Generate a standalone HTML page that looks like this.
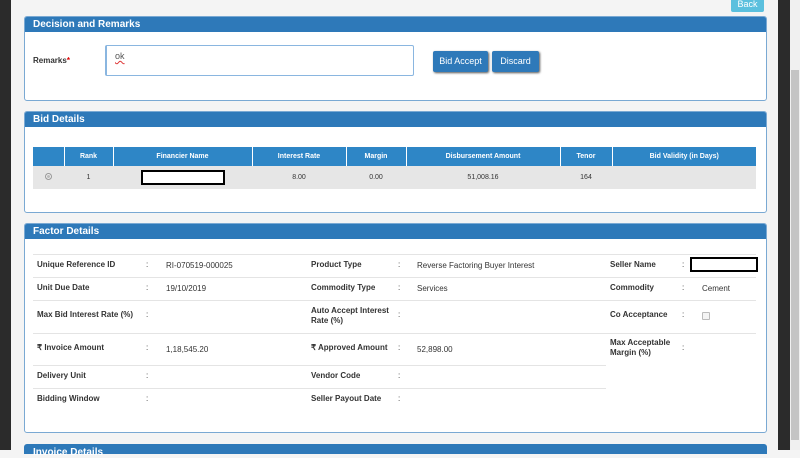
<!DOCTYPE html>
<html><head><style>
body{margin:0;width:800px;height:450px;overflow:hidden;background:#f4f4f4;font-family:"Liberation Sans",Arial,sans-serif;position:relative}
.abs{position:absolute}
.panel{position:absolute;left:24px;width:741px;background:#fff;border:1px solid #7aa9d3;border-radius:3px}
.ph{background:#2e79b9;color:#fff;font-weight:bold;font-size:10px;height:15px;line-height:15px;padding-left:8px;border-radius:2px 2px 0 0}
.btn{position:absolute;background:#2e79b9;color:#fff;font-size:9px;text-align:center;line-height:21px;height:21px;box-shadow:1px 1px 2px #555;border-radius:2px}
table{border-collapse:collapse;position:absolute;left:8px;top:35px;width:723px;font-size:7px;table-layout:fixed}
th{background:#2e86c6;color:#fff;height:19px;border-left:1px solid #fff;font-weight:bold;padding:0}
td{background:#e6e6e6;height:23px;text-align:center;color:#333;padding:0}
.t{position:absolute;font-size:8px;color:#333}
.b{font-weight:bold}
.ln{position:absolute;height:1px;background:#e4e4e4}
</style></head><body>
<div class="abs" style="left:0;top:0;width:11px;height:450px;background:#2b2b2b"></div>
<div class="abs" style="left:778px;top:0;width:12px;height:450px;background:#2b2b2b"></div>
<div class="abs" style="left:790px;top:0;width:10px;height:450px;background:#f0f0f0"></div>
<div class="abs" style="left:791px;top:70px;width:8px;height:370px;background:#c4c4c4"></div>
<div class="btn" style="left:731px;top:-6px;width:33px;background:#5bc0de;box-shadow:none;line-height:20px;height:18px;font-size:9px">Back</div>

<div class="panel" style="top:16px;height:83px">
<div class="ph">Decision and Remarks</div>
<div class="t b" style="left:8px;top:39px">Remarks<span style="color:#d00">*</span></div>
<div class="abs" style="left:80px;top:28px;width:309px;height:31px;border:1px solid #8ab6e0;border-left:2px solid #8ab6e0;border-radius:2px;font-size:9px;color:#555;padding:5px 0 0 8px;box-sizing:border-box;text-decoration:underline wavy #d33">ok</div>
<div class="btn" style="left:408px;top:34px;width:55px">Bid Accept</div>
<div class="btn" style="left:467px;top:34px;width:47px">Discard</div>
</div>

<div class="panel" style="top:111px;height:100px">
<div class="ph">Bid Details</div>
<table><colgroup><col style="width:31px"><col style="width:49px"><col style="width:139px"><col style="width:94px"><col style="width:60px"><col style="width:154px"><col style="width:52px"><col style="width:144px"></colgroup>
<tr><th style="border-left:none"></th><th>Rank</th><th>Financier Name</th><th>Interest Rate</th><th>Margin</th><th>Disbursement Amount</th><th>Tenor</th><th>Bid Validity (in Days)</th></tr>
<tr><td><span style="display:inline-block;width:5px;height:5px;border:1px solid #999;border-radius:50%;background:#bbb;box-shadow:inset 0 0 0 1px #eee"></span></td><td>1</td><td><span style="display:inline-block;width:80px;height:11px;border:2px solid #000;background:#fff;vertical-align:middle"></span></td><td>8.00</td><td>0.00</td><td>51,008.16</td><td>164</td><td></td></tr></table>
</div>

<div class="panel" style="top:223px;height:208px">
<div class="ph">Factor Details</div>
</div>
<div class="ln" style="left:33px;top:254px;width:723px"></div>
<div class="ln" style="left:33px;top:277px;width:723px"></div>
<div class="ln" style="left:33px;top:300px;width:723px"></div>
<div class="ln" style="left:33px;top:333px;width:723px"></div>
<div class="ln" style="left:33px;top:365px;width:573px"></div>
<div class="ln" style="left:33px;top:388px;width:573px"></div>

<div class="t b" style="left:37px;top:260px">Unique Reference ID</div><div class="t" style="left:146px;top:260px">:</div><div class="t" style="left:166px;top:261px">RI-070519-000025</div>
<div class="t b" style="left:37px;top:283px">Unit Due Date</div><div class="t" style="left:146px;top:283px">:</div><div class="t" style="left:166px;top:284px">19/10/2019</div>
<div class="t b" style="left:37px;top:310px">Max Bid Interest Rate (%)</div><div class="t" style="left:146px;top:310px">:</div>
<div class="t b" style="left:37px;top:343px">₹ Invoice Amount</div><div class="t" style="left:146px;top:343px">:</div><div class="t" style="left:166px;top:345px">1,18,545.20</div>
<div class="t b" style="left:37px;top:371px">Delivery Unit</div><div class="t" style="left:146px;top:371px">:</div>
<div class="t b" style="left:37px;top:394px">Bidding Window</div><div class="t" style="left:146px;top:394px">:</div>

<div class="t b" style="left:311px;top:260px">Product Type</div><div class="t" style="left:398px;top:260px">:</div><div class="t" style="left:417px;top:261px">Reverse Factoring Buyer Interest</div>
<div class="t b" style="left:311px;top:283px">Commodity Type</div><div class="t" style="left:398px;top:283px">:</div><div class="t" style="left:417px;top:284px">Services</div>
<div class="t b" style="left:311px;top:306px;line-height:10px">Auto Accept Interest<br>Rate (%)</div><div class="t" style="left:398px;top:310px">:</div>
<div class="t b" style="left:311px;top:343px">₹ Approved Amount</div><div class="t" style="left:398px;top:343px">:</div><div class="t" style="left:417px;top:345px">52,898.00</div>
<div class="t b" style="left:311px;top:371px">Vendor Code</div><div class="t" style="left:398px;top:371px">:</div>
<div class="t b" style="left:311px;top:394px">Seller Payout Date</div><div class="t" style="left:398px;top:394px">:</div>

<div class="t b" style="left:610px;top:260px">Seller Name</div><div class="t" style="left:682px;top:260px">:</div><div class="abs" style="left:690px;top:257px;width:64px;height:11px;border:2px solid #000;background:#fff"></div>
<div class="t b" style="left:610px;top:283px">Commodity</div><div class="t" style="left:682px;top:283px">:</div><div class="t" style="left:702px;top:284px">Cement</div>
<div class="t b" style="left:610px;top:310px">Co Acceptance</div><div class="t" style="left:682px;top:310px">:</div><div class="abs" style="left:702px;top:312px;width:6px;height:6px;border:1px solid #bbb;border-radius:1px;background:#f4f4f4"></div>
<div class="t b" style="left:610px;top:338px;line-height:10px">Max Acceptable<br>Margin (%)</div><div class="t" style="left:682px;top:343px">:</div>

<div class="abs" style="left:24px;top:444px;width:743px;height:10px;background:#2e79b9;border-radius:3px 3px 0 0"></div>
<div class="abs" style="left:33px;top:447px;font-size:10px;font-weight:bold;color:#fff">Invoice Details</div>
</body></html>
